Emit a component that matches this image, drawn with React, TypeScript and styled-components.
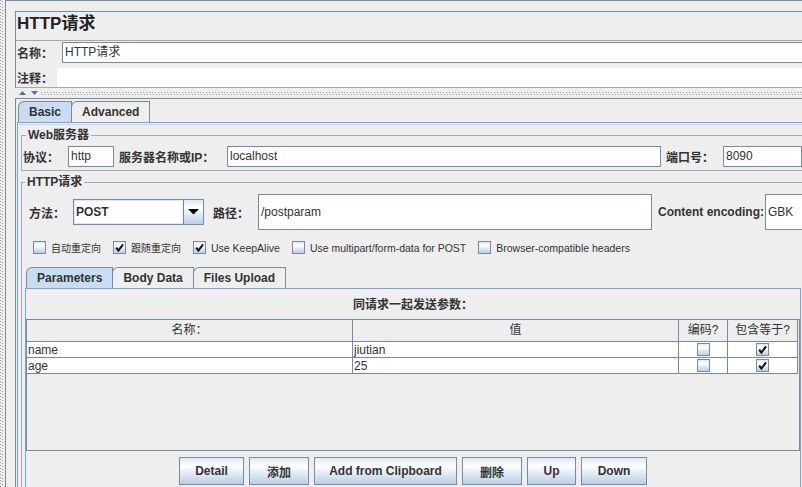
import React from "react";
import styled, { createGlobalStyle } from "styled-components";

const SANS = `"Liberation Sans", Arial, "Noto Sans CJK SC", sans-serif`;
const LINE = "#7a8a99";
const ETCH = "#a3aab2";
const SOFT = "#a8a8a8";
const BLUE = "#7aa0e2";
const SEL = "#c8ddf2";
const GRAD = "linear-gradient(to bottom, #dde8f3 0%, #ffffff 30%, #b8cfe5 100%)";
const TEXT = "#333333";

const GlobalStyle = createGlobalStyle`
  * { box-sizing: border-box; }
  html, body { margin: 0; padding: 0; background: #eeeeee; overflow: hidden; }
  body { font-family: ${SANS}; font-size: 12px; color: ${TEXT}; }
`;

const Root = styled.div`
  display: flex;
  width: 802px;
  height: 487px;
  overflow: hidden;
  background: #eeeeee;
`;

const DottedStrip = styled.div`
  flex: 0 0 5px;
  background-image:
    repeating-linear-gradient(to bottom, #9a9a9a 0 1px, transparent 1px 3px),
    repeating-linear-gradient(to bottom, transparent 0 1px, #9a9a9a 1px 2px, transparent 2px 3px);
  background-size: 1px 100%, 1px 100%;
  background-position: 0 0, 2px 0;
  background-repeat: no-repeat;
`;

const Outer = styled.div`
  flex: 1;
  min-width: 0;
  display: flex;
  flex-direction: column;
  border-left: 1px solid ${LINE};
  border-top: 1px solid ${LINE};
  padding: 10px 0 0 9px;
`;

const TopPanel = styled.div`
  display: flex;
  flex-direction: column;
  border-left: 1px solid ${LINE};
  border-top: 1px solid ${LINE};
`;

const Title = styled.div`
  height: 28px;
  padding-left: 1px;
  font-size: 17px;
  font-weight: bold;
  line-height: 23px;
  color: #222;
`;

const NameRow = styled.div`
  display: flex;
  align-items: flex-start;
  height: 24px;
  border-top: 1px solid ${SOFT};
`;

const CommentRow = styled.div`
  display: flex;
  align-items: center;
  height: 24px;
  border-bottom: 1px solid ${SOFT};
`;

const Label = styled.span<{ $w: number; $ml?: number; $pt?: number }>`
  flex: 0 0 ${(p) => p.$w}px;
  margin-left: ${(p) => p.$ml ?? 0}px;
  padding-top: ${(p) => p.$pt ?? 0}px;
  font-size: 12px;
  font-weight: bold;
  white-space: nowrap;
  color: ${TEXT};
  overflow: hidden;
`;

const TopLabel = styled(Label)`
  padding-left: 1px;
  align-self: center;
`;

const Field = styled.div<{ $w?: number; $h?: number; $open?: boolean; $mt?: number }>`
  flex: ${(p) => (p.$w ? `0 0 ${p.$w}px` : "1 1 0")};
  min-width: 0;
  height: ${(p) => p.$h ?? 21}px;
  margin-top: ${(p) => p.$mt ?? 0}px;
  background: #ffffff;
  border: 1px solid ${LINE};
  ${(p) => (p.$open ? "border-right: none;" : "")}
  padding-left: 2px;
  font-size: 12px;
  line-height: ${(p) => (p.$h ?? 21) - 2}px;
  white-space: nowrap;
  overflow: hidden;
  color: ${TEXT};
`;

const CommentField = styled.div`
  flex: 1;
  align-self: flex-end;
  height: 19px;
  background: #ffffff;
`;

const Splitter = styled.div`
  display: flex;
  align-items: center;
  height: 10px;
  padding-left: 4px;
`;

const Dots = styled.div`
  flex: 1;
  height: 3px;
  margin-left: 3px;
  background-image:
    repeating-linear-gradient(to right, #a0a0a0 0 1px, transparent 1px 3px),
    repeating-linear-gradient(to right, transparent 0 1px, #a0a0a0 1px 2px, transparent 2px 3px);
  background-size: 100% 1px, 100% 1px;
  background-position: 0 0, 0 2px;
  background-repeat: no-repeat;
`;

const BottomPanel = styled.div`
  flex: 1;
  min-height: 0;
  display: flex;
  flex-direction: column;
  border-top: 1px solid ${LINE};
  border-left: 1px solid ${LINE};
  padding-left: 1px;
`;

const TabStrip = styled.div`
  display: flex;
  align-items: flex-end;
  height: 23px;
  padding: 2px 0 0 1px;
`;

const ParamTabStrip = styled(TabStrip)`
  height: 21px;
  padding-top: 0;
`;

const Tab = styled.div<{ $active?: boolean }>`
  height: 21px;
  padding: 0 10px;
  margin-left: -1px;
  &:first-child { margin-left: 0; }
  border: 1px solid ${LINE};
  border-bottom: none;
  border-top-left-radius: 6px;
  background: ${(p) => (p.$active ? SEL : "#eeeeee")};
  font-size: 12px;
  font-weight: bold;
  line-height: 20px;
  white-space: nowrap;
  color: ${TEXT};
`;

const TabBody = styled.div`
  flex: 1;
  min-height: 0;
  display: flex;
  flex-direction: column;
  border-top: 1px solid ${BLUE};
  border-left: 1px solid ${BLUE};
  box-shadow: inset 0 1px 0 #eeeeee, inset 0 2px 0 #c9d6e6;
  padding-top: 4px;
`;

const Group = styled.fieldset<{ $grow?: boolean; $mt?: number }>`
  margin: ${(p) => p.$mt ?? 0}px 0 0 3px;
  padding: ${(p) => (p.$grow ? "4px 0 0 0" : "3px 0 3px 1px")};
  min-width: 0;
  border: 1px solid ${ETCH};
  border-right: none;
  ${(p) => (p.$grow ? "border-bottom: none; flex: 1; min-height: 0; display: flex; flex-direction: column;" : "")}
`;

const Legend = styled.legend`
  padding: 0 2px;
  margin-left: 3px;
  font-size: 12px;
  font-weight: bold;
  line-height: 16px;
  color: ${TEXT};
`;

const Row = styled.div<{ $h: number; $pl?: number }>`
  display: flex;
  align-items: center;
  height: ${(p) => p.$h}px;
  padding-left: ${(p) => p.$pl ?? 0}px;
`;

const Combo = styled.div`
  flex: 0 0 131px;
  height: 26px;
  display: flex;
  border: 1px solid ${LINE};
  background: #ffffff;
`;

const ComboText = styled.div`
  flex: 1;
  padding-left: 2px;
  font-size: 12px;
  font-weight: bold;
  line-height: 24px;
  color: ${TEXT};
  box-shadow: inset 0 0 0 1px #dfe8f2;
`;

const ComboButton = styled.div`
  flex: 0 0 20px;
  display: flex;
  align-items: center;
  justify-content: center;
  border-left: 1px solid ${LINE};
  background: ${GRAD};
`;

const CheckRow = styled.div`
  display: flex;
  align-items: center;
  height: 23px;
  margin-top: 6px;
  padding-left: 11px;
  gap: 12px;
`;

const CheckItem = styled.label<{ $cjk?: boolean }>`
  display: flex;
  align-items: center;
  gap: 5px;
  font-size: ${(p) => (p.$cjk ? 10 : 10.5)}px;
  white-space: nowrap;
  color: ${TEXT};
`;

const Box = styled.span`
  flex: none;
  width: 13px;
  height: 13px;
  border: 1px solid ${LINE};
  background: ${GRAD};
  display: inline-flex;
  align-items: center;
  justify-content: center;
`;

const ParamPane = styled.div`
  flex: 1;
  min-height: 0;
  display: flex;
  flex-direction: column;
  margin: 8px 1px 0 3px;
`;

const ParamBody = styled.div`
  flex: 1;
  min-height: 0;
  display: flex;
  flex-direction: column;
  border-top: 1px solid ${BLUE};
  border-left: 1px solid ${BLUE};
  border-right: 1px solid #8d9fb8;
`;

const ParamTitle = styled.div`
  height: 30px;
  padding-top: 8px;
  text-align: center;
  font-size: 12px;
  font-weight: bold;
  line-height: 16px;
  color: ${TEXT};
`;

const ScrollPane = styled.div`
  height: 132px;
  border: 1px solid ${LINE};
  background: #eeeeee;
  overflow: hidden;
`;

const COLS = "326px 326px 49px 70px";

const HeadRow = styled.div`
  display: grid;
  grid-template-columns: ${COLS};
  height: 22px;
`;

const HeadCell = styled.div`
  border-right: 1px solid ${LINE};
  border-bottom: 1px solid ${LINE};
  text-align: center;
  font-size: 12px;
  line-height: 21px;
  white-space: nowrap;
  color: ${TEXT};
`;

const BodyRow = styled.div`
  display: grid;
  grid-template-columns: ${COLS};
  height: 16px;
`;

const Cell = styled.div<{ $center?: boolean }>`
  display: flex;
  align-items: center;
  justify-content: ${(p) => (p.$center ? "center" : "flex-start")};
  padding-left: ${(p) => (p.$center ? 0 : 1)}px;
  background: #ffffff;
  border-right: 1px solid ${LINE};
  border-bottom: 1px solid ${LINE};
  font-size: 12px;
  white-space: nowrap;
  color: ${TEXT};
`;

const ButtonRow = styled.div`
  display: flex;
  justify-content: center;
  gap: 5px;
  margin-top: 6px;
`;

const Button = styled.button<{ $w: number }>`
  flex: 0 0 ${(p) => p.$w}px;
  height: 28px;
  padding: 0;
  border: 1px solid ${LINE};
  border-radius: 0;
  background: ${GRAD};
  font-family: ${SANS};
  font-size: 12px;
  font-weight: bold;
  color: ${TEXT};
  white-space: nowrap;
`;

const CheckMark = () => (
  <svg width="11" height="11" viewBox="0 0 11 11">
    <path d="M2.2 5.6 L4.4 8.6 L9 2.4" fill="none" stroke="#111" strokeWidth="2" />
  </svg>
);

const CheckBox = ({ checked }: { checked?: boolean }) => <Box>{checked ? <CheckMark /> : null}</Box>;

const DownArrow = () => (
  <svg width="11" height="6" viewBox="0 0 11 6">
    <polygon points="0,0 11,0 5.5,5.5" fill="#000" />
  </svg>
);

const SplitArrows = () => (
  <svg width="19" height="6" viewBox="0 0 19 6">
    <polygon points="0,5 3.5,1 7,5" fill="#4f74b3" />
    <polygon points="12,1 19,1 15.5,5" fill="#4f74b3" />
  </svg>
);

const checks: { label: string; checked: boolean; cjk?: boolean }[] = [
  { label: "自动重定向", checked: false, cjk: true },
  { label: "跟随重定向", checked: true, cjk: true },
  { label: "Use KeepAlive", checked: true },
  { label: "Use multipart/form-data for POST", checked: false },
  { label: "Browser-compatible headers", checked: false },
];

const params = [
  { name: "name", value: "jiutian", encode: false, eq: true },
  { name: "age", value: "25", encode: false, eq: true },
];

const buttons: { label: string; w: number }[] = [
  { label: "Detail", w: 65 },
  { label: "添加", w: 60 },
  { label: "Add from Clipboard", w: 143 },
  { label: "删除", w: 60 },
  { label: "Up", w: 49 },
  { label: "Down", w: 66 },
];

export default function App() {
  return (
    <>
      <GlobalStyle />
      <Root>
        <DottedStrip />
        <Outer>
          <TopPanel>
            <Title>HTTP请求</Title>
            <NameRow>
              <TopLabel $w={46}>名称：</TopLabel>
              <Field $mt={1} $open>
                HTTP请求
              </Field>
            </NameRow>
            <CommentRow>
              <TopLabel $w={41} $pt={3}>
                注释：
              </TopLabel>
              <CommentField />
            </CommentRow>
          </TopPanel>
          <Splitter>
            <SplitArrows />
            <Dots />
          </Splitter>
          <BottomPanel>
            <TabStrip>
              <Tab $active>Basic</Tab>
              <Tab>Advanced</Tab>
            </TabStrip>
            <TabBody>
              <Group>
                <Legend>Web服务器</Legend>
                <Row $h={21}>
                  <Label $w={45}>协议：</Label>
                  <Field $w={46}>http</Field>
                  <Label $w={108} $ml={5}>
                    服务器名称或IP：
                  </Label>
                  <Field>localhost</Field>
                  <Label $w={57} $ml={5}>
                    端口号：
                  </Label>
                  <Field $w={79}>8090</Field>
                </Row>
              </Group>
              <Group $grow $mt={3}>
                <Legend>HTTP请求</Legend>
                <Row $h={36} $pl={7}>
                  <Label $w={44}>方法：</Label>
                  <Combo>
                    <ComboText>POST</ComboText>
                    <ComboButton>
                      <DownArrow />
                    </ComboButton>
                  </Combo>
                  <Label $w={45} $ml={9}>
                    路径：
                  </Label>
                  <Field $h={36}>/postparam</Field>
                  <Label $w={107} $ml={6}>
                    Content encoding:
                  </Label>
                  <Field $w={37} $h={36} $open>
                    GBK
                  </Field>
                </Row>
                <CheckRow>
                  {checks.map((c) => (
                    <CheckItem key={c.label} $cjk={c.cjk}>
                      <CheckBox checked={c.checked} />
                      {c.label}
                    </CheckItem>
                  ))}
                </CheckRow>
                <ParamPane>
                  <ParamTabStrip>
                    <Tab $active>Parameters</Tab>
                    <Tab>Body Data</Tab>
                    <Tab>Files Upload</Tab>
                  </ParamTabStrip>
                  <ParamBody>
                    <ParamTitle>同请求一起发送参数：</ParamTitle>
                    <ScrollPane>
                      <HeadRow>
                        <HeadCell>名称：</HeadCell>
                        <HeadCell>值</HeadCell>
                        <HeadCell>编码?</HeadCell>
                        <HeadCell>包含等于?</HeadCell>
                      </HeadRow>
                      {params.map((p) => (
                        <BodyRow key={p.name}>
                          <Cell>{p.name}</Cell>
                          <Cell>{p.value}</Cell>
                          <Cell $center>
                            <CheckBox checked={p.encode} />
                          </Cell>
                          <Cell $center>
                            <CheckBox checked={p.eq} />
                          </Cell>
                        </BodyRow>
                      ))}
                    </ScrollPane>
                    <ButtonRow>
                      {buttons.map((b) => (
                        <Button key={b.label} $w={b.w}>
                          {b.label}
                        </Button>
                      ))}
                    </ButtonRow>
                  </ParamBody>
                </ParamPane>
              </Group>
            </TabBody>
          </BottomPanel>
        </Outer>
      </Root>
    </>
  );
}
